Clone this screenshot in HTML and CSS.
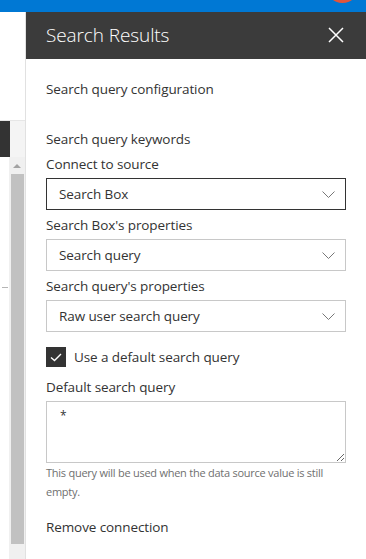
FILE: index.html
```html
<!DOCTYPE html>
<html lang="en">

<head>
    <meta charset="UTF-8">
    <meta name="viewport" content="width=device-width, initial-scale=1.0">
    <title>Search Results</title>
    <link rel="stylesheet" href="styles.css">
</head>

<body>
    <div class="suite-bar">
        <div class="avatar"></div>
    </div>

    <div class="workspace">
        <div class="page-edge">
            <div class="edge-top"></div>
            <div class="edge-toolbar">
                <div class="edge-button"></div>
            </div>
            <div class="edge-scroll">
                <div class="edge-canvas">
                    <div class="dash"></div>
                </div>
                <div class="scrollbar">
                    <div class="scroll-arrow"></div>
                    <div class="scroll-thumb"></div>
                </div>
            </div>
        </div>

        <aside class="pane">
            <div class="pane-header">
                <h1>Search Results</h1>
                <button class="close-btn" aria-label="Close">
                    <svg width="16" height="16" viewBox="0 0 16 16">
                        <path d="M1 1 L15 15 M15 1 L1 15" stroke="#fff" stroke-width="1.5" fill="none" />
                    </svg>
                </button>
            </div>

            <div class="pane-body">
                <div class="section-title">Search query configuration</div>

                <div class="group-title">Search query keywords</div>

                <label class="field-label">Connect to source</label>
                <div class="dropdown dropdown-focus">
                    <span>Search Box</span>
                    <svg class="chevron" width="13" height="7" viewBox="0 0 13 7">
                        <path d="M0.5 0.5 L6.5 6.5 L12.5 0.5" stroke="#777" stroke-width="1" fill="none" />
                    </svg>
                </div>

                <label class="field-label">Search Box's properties</label>
                <div class="dropdown">
                    <span>Search query</span>
                    <svg class="chevron" width="13" height="7" viewBox="0 0 13 7">
                        <path d="M0.5 0.5 L6.5 6.5 L12.5 0.5" stroke="#777" stroke-width="1" fill="none" />
                    </svg>
                </div>

                <label class="field-label">Search query's properties</label>
                <div class="dropdown">
                    <span>Raw user search query</span>
                    <svg class="chevron" width="13" height="7" viewBox="0 0 13 7">
                        <path d="M0.5 0.5 L6.5 6.5 L12.5 0.5" stroke="#777" stroke-width="1" fill="none" />
                    </svg>
                </div>

                <div class="checkbox-row">
                    <span class="checkbox">
                        <svg width="20" height="20" viewBox="0 0 20 20">
                            <path d="M5 10.5 L8.5 13.5 L15 7" stroke="#fff" stroke-width="1.4" fill="none" />
                        </svg>
                    </span>
                    <span class="checkbox-label">Use a default search query</span>
                </div>

                <label class="field-label">Default search query</label>
                <textarea class="query-input">*</textarea>
                <p class="help-text">This query will be used when the data source value is still empty.</p>

                <div class="remove-link">Remove connection</div>
            </div>
        </aside>
    </div>
</body>

</html>
```

FILE: styles.css
```css
:root {
    --brand-blue: #0078d4;
    --header-dark: #3b3b3b;
    --text-color: #333333;
    --muted-color: #6f6f6f;
    --border-color: #c8c8c8;
    --edge-gray: #f0f0f0;
}

* {
    margin: 0;
    padding: 0;
    box-sizing: border-box;
    font-family: 'Open Sans', 'Noto Sans', sans-serif;
}

html,
body {
    width: 366px;
    height: 559px;
    overflow: hidden;
    background: #fff;
    color: var(--text-color);
}

.suite-bar {
    height: 12px;
    background: var(--brand-blue);
    display: flex;
    justify-content: flex-end;
    overflow: hidden;
}

.avatar {
    width: 33px;
    height: 33px;
    border-radius: 50%;
    background: #e2553b;
    margin-top: -30px;
    margin-right: 7px;
}

.workspace {
    display: flex;
    height: 547px;
}

/* the page behind the pane */
.page-edge {
    width: 25px;
    display: flex;
    flex-direction: column;
}

.edge-top {
    height: 108px;
}

.edge-toolbar {
    height: 37px;
    background: #f4f4f4;
    border-top: 1px solid #e6e6e6;
}

.edge-button {
    width: 10px;
    height: 36px;
    background: #333;
}

.edge-scroll {
    flex: 1;
    display: flex;
}

.edge-canvas {
    width: 9px;
    padding-top: 130px;
}

.dash {
    width: 6px;
    margin-left: 2px;
    border-top: 1px dashed #b5b5b5;
}

.scrollbar {
    flex: 1;
    background: var(--edge-gray);
    display: flex;
    flex-direction: column;
    align-items: center;
    padding-top: 7px;
}

.scroll-arrow {
    width: 0;
    height: 0;
    border-left: 4px solid transparent;
    border-right: 4px solid transparent;
    border-bottom: 4px solid #a3a3a3;
}

.scroll-thumb {
    width: 13px;
    height: 370px;
    margin-top: 6px;
    background: #c1c1c1;
}

/* property pane */
.pane {
    flex: 1;
    border-left: 1px solid #e1e1e1;
    display: flex;
    flex-direction: column;
}

.pane-header {
    height: 47px;
    background: var(--header-dark);
    display: flex;
    align-items: center;
    justify-content: space-between;
    padding: 0 22px 0 20px;
}

.pane-header h1 {
    font-size: 19px;
    font-weight: 300;
    color: #fff;
    line-height: 28px;
    margin-top: -2px;
    letter-spacing: -0.1px;
}

.close-btn {
    background: none;
    border: none;
    width: 16px;
    height: 16px;
    display: flex;
    margin-top: -2px;
}

.pane-body {
    padding: 20px 20px 0 20px;
    display: flex;
    flex-direction: column;
    font-size: 13.5px;
    letter-spacing: -0.1px;
}

.section-title {
    line-height: 20px;
}

.group-title {
    line-height: 20px;
    margin-top: 30px;
}

.field-label {
    display: block;
    line-height: 20px;
    padding: 5px 0 4px;
}

.dropdown {
    height: 32px;
    border: 1px solid var(--border-color);
    display: flex;
    align-items: center;
    justify-content: space-between;
    padding: 0 10px 0 12px;
}

.dropdown-focus {
    border-color: #333;
}

.chevron {
    margin-top: 1px;
}

.checkbox-row {
    display: flex;
    align-items: center;
    gap: 8px;
    margin-top: 15px;
    margin-bottom: 5px;
    height: 20px;
}

.checkbox {
    width: 20px;
    height: 20px;
    background: #333;
    display: flex;
}

.checkbox-label {
    line-height: 20px;
}

.query-input {
    height: 62px;
    border: 1px solid var(--border-color);
    padding: 5px 13px;
    font-size: 12px;
    color: var(--text-color);
    resize: vertical;
    outline: none;
}

.help-text {
    font-size: 11px;
    line-height: 19px;
    color: var(--muted-color);
    letter-spacing: -0.25px;
}

.remove-link {
    line-height: 20px;
    margin-top: 16px;
}
```
